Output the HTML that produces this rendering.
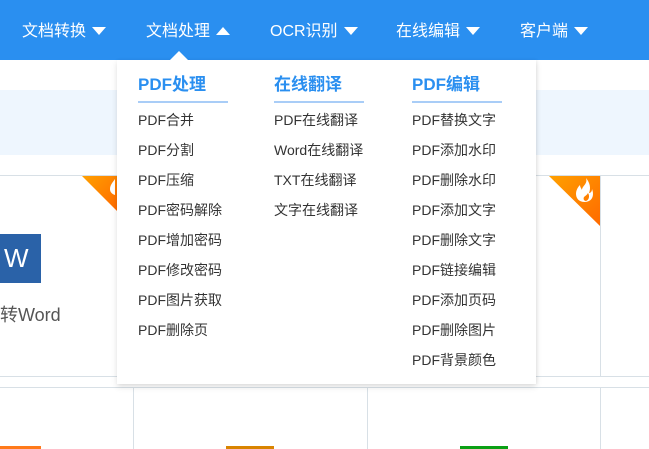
<!DOCTYPE html>
<html><head><meta charset="utf-8"><style>
*{margin:0;padding:0;box-sizing:border-box}
body{width:649px;height:449px;overflow:hidden;background:#fff;font-family:"Liberation Sans","Noto Sans CJK SC",sans-serif;position:relative}
.nav{position:absolute;left:0;top:0;width:649px;height:60px;background:#2a8ff0}
.ni{position:absolute;top:21px;color:#fff;font-size:16px;line-height:22px;white-space:nowrap}
.ni i{display:inline-block;width:0;height:0;border-left:7px solid transparent;border-right:7px solid transparent;border-top:8px solid #fff;margin-left:6px;vertical-align:middle;position:relative;top:-1px}
.ni i.up{border-top:none;border-bottom:8px solid #fff}
.band{position:absolute;left:0;top:90px;width:649px;height:65px;background:#eef6fe}
.h{position:absolute;left:0;width:649px;height:1px;background:#d8e0e6}
.v{position:absolute;width:1px;background:#d8e0e6}
.dd{position:absolute;left:117px;top:60px;width:419px;height:324px;background:#fff;box-shadow:0 3px 6px rgba(0,0,0,.12),1px 0 3px rgba(0,0,0,.06)}
.caret{position:absolute;left:170px;top:51px;width:0;height:0;border-left:9px solid transparent;border-right:9px solid transparent;border-bottom:9px solid #fff}
.col{position:absolute;top:0}
.col h3{position:absolute;top:14px;left:0;font-size:17px;font-weight:bold;color:#2a8ff0;white-space:nowrap;line-height:22px}
.col .u{position:absolute;top:41px;left:0;width:90px;height:2px;background:#a9cdf7}
.col p{position:absolute;left:0;font-size:14px;color:#333;white-space:nowrap;line-height:20px}
</style></head><body>
<div class="nav">
<div class="ni" style="left:22px">文档转换<i></i></div>
<div class="ni" style="left:146px">文档处理<i class="up"></i></div>
<div class="ni" style="left:270px">OCR识别<i></i></div>
<div class="ni" style="left:396px">在线编辑<i></i></div>
<div class="ni" style="left:520px">客户端<i></i></div>
</div>
<div class="band"></div>
<div class="h" style="top:175px"></div>
<div class="h" style="top:376px"></div>
<div class="h" style="top:387px"></div>
<div class="v" style="left:133px;top:387px;height:62px"></div>
<div class="v" style="left:367px;top:387px;height:62px"></div>
<div class="v" style="left:600px;top:176px;height:200px"></div>
<div class="v" style="left:600px;top:387px;height:62px"></div>
<svg style="position:absolute;left:82px;top:176px" width="35" height="35"><defs><linearGradient id="g" x1="0" y1="0" x2="1" y2="1"><stop offset="0" stop-color="#ffa000"/><stop offset="1" stop-color="#ff6a00"/></linearGradient></defs><polygon points="0,0 35,0 35,35" fill="url(#g)"/><path d="M33 3c-2 3-5 6-5 10 0 3 2 5 5 6z" fill="#fff"/></svg>
<svg style="position:absolute;left:549px;top:176px" width="51" height="50"><defs><linearGradient id="g2" x1="0" y1="0" x2="1" y2="1"><stop offset="0" stop-color="#ffa000"/><stop offset="1" stop-color="#ff6a00"/></linearGradient></defs><polygon points="0,0 51,0 51,50" fill="url(#g2)"/><path d="M37 2c2 6-4 8-4 12-1-2-2-3-2-5-4 4-5 9-3 13 2 4 8 5 12 3 4-2 5-7 3-12 0 2-1 4-3 4 2-5 1-10-3-15zm2 15c2 3 1 7-2 8-2 0-3-2-2-4 1-1 3-2 4-4z" fill="#fff" fill-rule="evenodd"/></svg>
<div style="position:absolute;left:0;top:234px;width:41px;height:49px;background:#2a62a8;color:#fff;font-size:26px;line-height:49px;padding-left:4px">W</div>
<div style="position:absolute;left:0;top:303px;font-size:18px;color:#555;line-height:24px">转Word</div>
<div style="position:absolute;left:0;top:446px;width:41px;height:3px;background:#ff7a1a"></div>
<div style="position:absolute;left:226px;top:446px;width:48px;height:3px;background:#d98400"></div>
<div style="position:absolute;left:460px;top:446px;width:48px;height:3px;background:#0aa014"></div>
<div class="dd">
<div class="col" style="left:21px"><h3>PDF处理</h3><div class="u"></div>
<p style="top:50px">PDF合并</p><p style="top:80px">PDF分割</p><p style="top:110px">PDF压缩</p><p style="top:140px">PDF密码解除</p><p style="top:170px">PDF增加密码</p><p style="top:200px">PDF修改密码</p><p style="top:230px">PDF图片获取</p><p style="top:260px">PDF删除页</p></div>
<div class="col" style="left:157px"><h3>在线翻译</h3><div class="u"></div>
<p style="top:50px">PDF在线翻译</p><p style="top:80px">Word在线翻译</p><p style="top:110px">TXT在线翻译</p><p style="top:140px">文字在线翻译</p></div>
<div class="col" style="left:295px"><h3>PDF编辑</h3><div class="u"></div>
<p style="top:50px">PDF替换文字</p><p style="top:80px">PDF添加水印</p><p style="top:110px">PDF删除水印</p><p style="top:140px">PDF添加文字</p><p style="top:170px">PDF删除文字</p><p style="top:200px">PDF链接编辑</p><p style="top:230px">PDF添加页码</p><p style="top:260px">PDF删除图片</p><p style="top:290px">PDF背景颜色</p></div>
</div>
<div class="caret"></div>
</body></html>
